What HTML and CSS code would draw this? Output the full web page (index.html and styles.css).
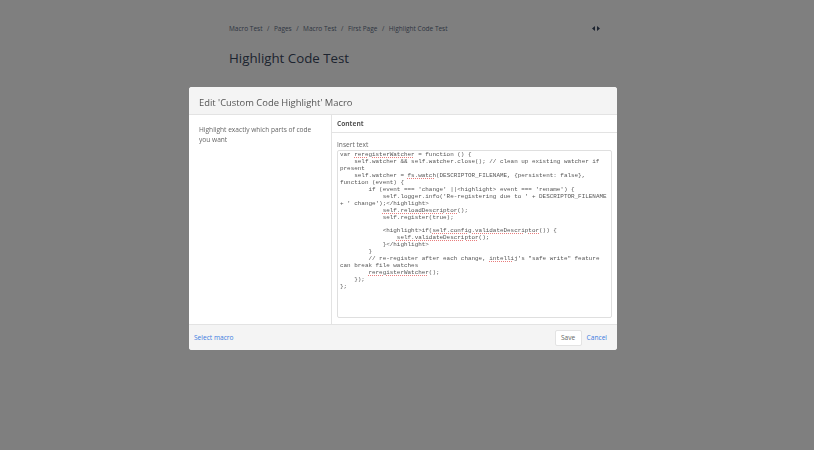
FILE: index.html
```html
<!DOCTYPE html>
<html lang="en">
<head>
<meta charset="utf-8">
<title>Highlight Code Test</title>
<link rel="stylesheet" href="styles.css">
</head>
<body>
<main class="page">
  <div class="topline">
    <nav class="crumbs">
      <span>Macro Test</span><i>/</i><span>Pages</span><i>/</i><span>Macro Test</span><i>/</i><span>First Page</span><i>/</i><span>Highlight Code Test</span>
    </nav>
    <svg class="expand" width="8" height="5" viewBox="0 0 8 5"><path d="M0 2.500 3 0V5ZM8 2.500 5 0V5Z"/></svg>
  </div>
  <h1 class="title">Highlight Code Test</h1>
</main>
<div class="backdrop"></div>
<section class="dialog">
  <header class="dialog-head">Edit 'Custom Code Highlight' Macro</header>
  <div class="dialog-body">
    <aside class="desc">Highlight exactly which parts of code you want</aside>
    <div class="panel">
      <div class="panel-head">Content</div>
      <div class="field">
        <label class="field-label">Insert text</label>
        <div class="code">var <u>reregisterWatcher</u> = function () {
    self.watcher &amp;&amp; self.watcher.close(); // clean up existing watcher if present
    self.watcher = <u>fs.watch</u>(DESCRIPTOR_FILENAME, {persistent: false}, function (event) {
        if (event === 'change' ||&lt;highlight&gt; event === 'rename') {
            self.logger.info('Re-registering due to ' + DESCRIPTOR_FILENAME + ' change');&lt;/highlight&gt;
            <u>self.reloadDescriptor</u>();
            self.register(true);

            &lt;highlight&gt;if(<u>self.config.validateDescriptor</u>()) {
                <u>self.validateDescriptor</u>();
            }&lt;/highlight&gt;
        }
        // re-register after each change, <u>intellij</u>'s "safe write" feature can break file watches
        <u>reregisterWatcher</u>();
    });
};</div>
      </div>
    </div>
  </div>
  <footer class="dialog-foot">
    <a class="link">Select macro</a>
    <div class="actions">
      <button class="save">Save</button>
      <a class="link">Cancel</a>
    </div>
  </footer>
</section>
</body>
</html>
```
FILE: styles.css
```css
* { box-sizing: border-box; }
html, body { margin: 0; height: 100%; }
body { background: #fff; font-family: "Open Sans", "Liberation Sans", sans-serif; overflow: hidden; }
.page { width: 371px; margin-left: 229px; padding-top: 24px; }
.topline { display: flex; justify-content: space-between; align-items: center; height: 9px; }
.crumbs { font-size: 6.5px; color: #5e6c84; display: flex; gap: 4px; line-height: 9px; white-space: nowrap; }
.crumbs i { font-style: normal; margin: 0 0.5px; }
.expand { fill: #3a4860; }
.title { font-size: 13.3px; font-weight: 400; color: #3a4860; margin: 15px 0 0; line-height: 20px; }
.backdrop { position: fixed; inset: 0; background: rgba(0, 0, 0, .5); }
.dialog { position: absolute; left: 189px; top: 87px; width: 428px; height: 263px; background: #fff; border-radius: 3px; display: flex; flex-direction: column; overflow: hidden; }
.dialog-head { height: 28px; flex: none; background: #f4f4f4; border-bottom: 1px solid #e3e3e3; padding: 0 10px; line-height: 32px; font-size: 9.4px; color: #555; }
.dialog-body { flex: 1; display: flex; min-height: 0; }
.desc { width: 143px; flex: none; padding: 10px; font-size: 6.6px; line-height: 10px; color: #666; border-right: 1px solid #e3e3e3; }
.panel { flex: 1; display: flex; flex-direction: column; }
.panel-head { height: 18px; flex: none; border-bottom: 1px solid #e3e3e3; padding: 0 5px; font-size: 6.6px; font-weight: 700; line-height: 18px; color: #555; }
.field { flex: 1; padding: 7px 5px 6px; display: flex; flex-direction: column; }
.field-label { font-size: 6.6px; line-height: 9px; height: 10px; color: #666; }
.code { flex: 1; border: 1px solid #dfdfdf; border-radius: 2px; padding: 1px 0 0 2px; font-family: "Liberation Mono", monospace; font-size: 5.93px; line-height: 6.95px; color: #555; white-space: pre-wrap; overflow: hidden; }
.code u { text-decoration: underline dotted rgba(226, 80, 80, .75) 1px; text-underline-offset: .5px; }
.dialog-foot { height: 26px; flex: none; background: #f4f4f4; border-top: 1px solid #e3e3e3; padding: 0 10px 0 5px; display: flex; align-items: center; justify-content: space-between; font-size: 6.6px; }
.link { color: #3b7be0; }
.actions { display: flex; align-items: center; gap: 5px; }
.save { width: 27px; height: 16px; padding: 0; background: #fff; border: 1px solid #e3e3e3; border-radius: 2px; font: inherit; color: #666; }
```
